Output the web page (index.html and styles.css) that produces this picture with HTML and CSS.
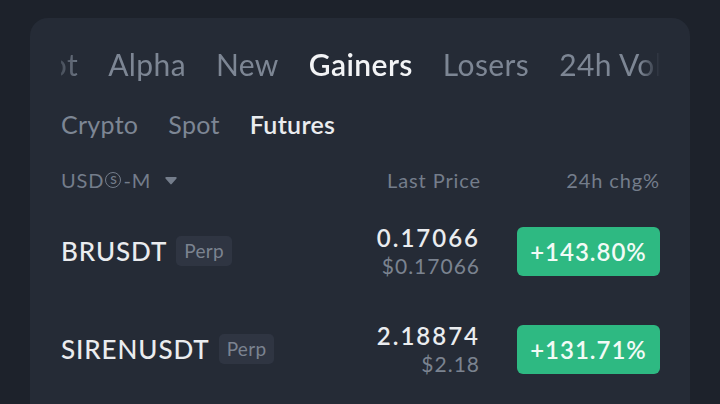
FILE: index.html
```html
<!DOCTYPE html>
<html lang="en">
<head>
    <meta charset="UTF-8">
    <meta name="viewport" content="width=device-width, initial-scale=1.0">
    <title>Markets - Gainers</title>
    <link rel="stylesheet" href="styles.css">
</head>
<body>
    <div class="card">
        <!-- Top category tabs, scrolled so "Gainers" sits in view -->
        <div class="tabs">
            <div class="tabs-track">
                <span class="tab">Hot</span>
                <span class="tab">Alpha</span>
                <span class="tab">New</span>
                <span class="tab active">Gainers</span>
                <span class="tab">Losers</span>
                <span class="tab">24h Vol</span>
                <span class="tab">Market Cap</span>
            </div>
        </div>

        <div class="subtabs">
            <span class="subtab">Crypto</span>
            <span class="subtab">Spot</span>
            <span class="subtab active">Futures</span>
        </div>

        <div class="list-head">
            <div class="market-select">
                <span>USD</span><span class="circled">S</span><span>-M</span>
                <svg class="caret" width="12" height="9" viewBox="0 0 12 9">
                    <path d="M1.2 1h9.6c.8 0 1.2.9.7 1.5L6.7 8c-.4.5-1 .5-1.4 0L.5 2.5C0 1.9.4 1 1.2 1z" fill="currentColor"/>
                </svg>
            </div>
            <div class="head-price">Last Price</div>
            <div class="head-chg">24h chg%</div>
        </div>

        <div class="row">
            <div class="symbol">
                <span class="name">BRUSDT</span>
                <span class="tag">Perp</span>
            </div>
            <div class="price">
                <div class="last">0.17066</div>
                <div class="fiat">$0.17066</div>
            </div>
            <div class="chg up">+143.80%</div>
        </div>

        <div class="row">
            <div class="symbol">
                <span class="name">SIRENUSDT</span>
                <span class="tag">Perp</span>
            </div>
            <div class="price">
                <div class="last">2.18874</div>
                <div class="fiat">$2.18</div>
            </div>
            <div class="chg up">+131.71%</div>
        </div>
    </div>
</body>
</html>
```

FILE: styles.css
```css
/* Page */
body {
    margin: 0;
    height: 404px;
    overflow: hidden;
    background-color: #1d222b;
    font-family: 'Lato', 'Liberation Sans', sans-serif;
    color: #eaecef;
}

/* Main card */
.card {
    margin: 18px 30px 0;
    padding: 28px 30px 40px 31px;
    background-color: #252b36;
    border-radius: 18px;
}

/* Category tabs */
.tabs {
    height: 36px;
    overflow: hidden;
    -webkit-mask-image: linear-gradient(to right, rgba(0,0,0,0.4) 0, #000 24px, #000 calc(100% - 20px), rgba(0,0,0,0) 100%);
    mask-image: linear-gradient(to right, rgba(0,0,0,0.4) 0, #000 24px, #000 calc(100% - 20px), rgba(0,0,0,0) 100%);
}

.tabs-track {
    display: flex;
    align-items: center;
    gap: 30px;
    height: 36px;
    margin-left: -34px; /* scroll offset */
    white-space: nowrap;
}

.tab {
    font-size: 30px;
    letter-spacing: 0.4px;
    color: #7d8694;
}

.tab.active {
    color: #f3f4f6;
    font-weight: 600;
}

/* Sub tabs */
.subtabs {
    display: flex;
    align-items: center;
    gap: 30px;
    height: 32px;
    margin-top: 26px;
}

.subtab {
    font-size: 25px;
    letter-spacing: 0.3px;
    color: #7d8694;
}

.subtab.active {
    color: #eaecef;
    font-weight: 600;
}

/* List header */
.list-head {
    display: flex;
    align-items: center;
    height: 24px;
    margin-top: 28px;
    font-size: 20px;
    letter-spacing: 0.9px;
    color: #747d8b;
}

.market-select {
    flex: 1;
    display: flex;
    align-items: center;
}

.circled {
    flex-shrink: 0;
    box-sizing: border-box;
    display: inline-flex;
    align-items: center;
    justify-content: center;
    width: 16px;
    height: 16px;
    margin: 0 2px 0 1px;
    border: 1.6px solid #747d8b;
    border-radius: 50%;
    font-size: 12px;
    font-weight: 600;
    line-height: 1;
    letter-spacing: 0;
}

.caret {
    margin-left: 14px;
    color: #747d8b;
}

.head-chg {
    width: 179px;
    text-align: right;
}

/* Rows */
.row {
    display: flex;
    align-items: center;
    height: 98px;
}

.list-head + .row {
    margin-top: 10px;
}

.symbol {
    flex: 1;
    display: flex;
    align-items: center;
}

.name {
    font-size: 26px;
    font-weight: 500;
    letter-spacing: 0.9px;
    color: #eaecef;
}

.tag {
    margin-left: 9px;
    padding: 0 8px;
    height: 30px;
    line-height: 30px;
    background-color: #2f3542;
    border-radius: 5px;
    font-size: 19px;
    letter-spacing: 0.3px;
    color: #7b8390;
}

.price {
    text-align: right;
    margin-right: 37px;
}

.last {
    font-size: 24px;
    font-weight: 600;
    letter-spacing: 2px;
    line-height: 30px;
    color: #eaecef;
}

.fiat {
    font-size: 21px;
    letter-spacing: 1px;
    line-height: 26px;
    color: #7b8390;
}

.chg {
    width: 143px;
    height: 49px;
    line-height: 49px;
    text-align: center;
    border-radius: 6px;
    font-size: 24px;
    font-weight: 600;
    letter-spacing: 1px;
    color: #f2fbf6;
}

.chg.up {
    background-color: #2eb982;
}
```
